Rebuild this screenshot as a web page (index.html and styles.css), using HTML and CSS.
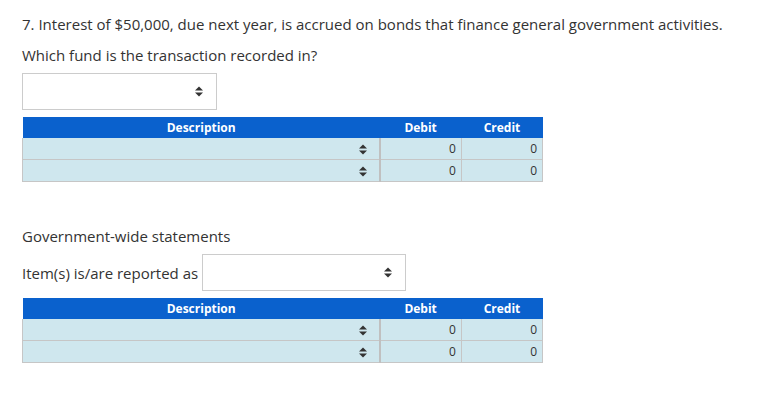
FILE: index.html
```html
<!DOCTYPE html>
<html>
<head>
<meta charset="utf-8">
<link rel="stylesheet" href="styles.css">
</head>
<body>
<div class="page">
  <p class="q">7. Interest of $50,000, due next year, is accrued on bonds that finance general government activities.</p>
  <p class="q q2">Which fund is the transaction recorded in?</p>
  <div class="select big"><span class="arr"><svg width="8" height="11" viewBox="0 0 8 11"><path d="M0 4.5 L4 0.5 L8 4.5 Z M0 6.5 L8 6.5 L4 10.5 Z" fill="#333"/></svg></span></div>

  <table class="je t1">
    <thead><tr><th class="desc">Description</th><th class="num">Debit</th><th class="num">Credit</th></tr></thead>
    <tbody>
      <tr><td class="desc"><span class="arr"><svg width="8" height="11" viewBox="0 0 8 11"><path d="M0 4.5 L4 0.5 L8 4.5 Z M0 6.5 L8 6.5 L4 10.5 Z" fill="#333"/></svg></span></td><td class="num">0</td><td class="num">0</td></tr>
      <tr><td class="desc"><span class="arr"><svg width="8" height="11" viewBox="0 0 8 11"><path d="M0 4.5 L4 0.5 L8 4.5 Z M0 6.5 L8 6.5 L4 10.5 Z" fill="#333"/></svg></span></td><td class="num">0</td><td class="num">0</td></tr>
    </tbody>
  </table>

  <p class="q q3">Government-wide statements</p>
  <div class="inline">
    <span class="lbl">Item(s) is/are reported as</span>
    <div class="select"><span class="arr"><svg width="8" height="11" viewBox="0 0 8 11"><path d="M0 4.5 L4 0.5 L8 4.5 Z M0 6.5 L8 6.5 L4 10.5 Z" fill="#333"/></svg></span></div>
  </div>

  <table class="je t2">
    <thead><tr><th class="desc">Description</th><th class="num">Debit</th><th class="num">Credit</th></tr></thead>
    <tbody>
      <tr><td class="desc"><span class="arr"><svg width="8" height="11" viewBox="0 0 8 11"><path d="M0 4.5 L4 0.5 L8 4.5 Z M0 6.5 L8 6.5 L4 10.5 Z" fill="#333"/></svg></span></td><td class="num">0</td><td class="num">0</td></tr>
      <tr><td class="desc"><span class="arr"><svg width="8" height="11" viewBox="0 0 8 11"><path d="M0 4.5 L4 0.5 L8 4.5 Z M0 6.5 L8 6.5 L4 10.5 Z" fill="#333"/></svg></span></td><td class="num">0</td><td class="num">0</td></tr>
    </tbody>
  </table>
</div>
</body>
</html>
```
FILE: styles.css
```css
html, body {
  margin: 0;
  padding: 0;
  background: #fff;
}
body {
  font-family: "Open Sans", "Liberation Sans", sans-serif;
  color: #333;
  font-size: 15px;
}
.page {
  padding: 14px 0 0 22px;
}
.q {
  margin: 0;
  line-height: 20px;
}
.q2 {
  margin-top: 11px;
}
.select {
  box-sizing: border-box;
  width: 204px;
  height: 37px;
  border: 1px solid #ccc;
  background: #fff;
  display: flex;
  align-items: center;
  justify-content: flex-end;
  padding-right: 13px;
}
.select.big {
  width: 195px;
  margin-top: 8px;
}
.arr {
  display: inline-flex;
}
.je {
  border-collapse: collapse;
  width: 521px;
  font-size: 12px;
}
.t1 {
  margin-top: 7px;
}
.je th {
  background: #0a61cd;
  color: #fff;
  font-weight: 700;
  height: 21px;
  padding: 0;
  text-align: center;
}
.je th.desc {
  width: 357px;
}
.je td {
  background: #cfe7ee;
  height: 21px;
  padding: 0;
  border: 1px solid #c6c6c6;
  border-top: 0;
}
.je td.desc {
  text-align: right;
  padding-right: 12px;
  border-right: 2px solid #c0c0c0;
}
.je td.desc .arr {
  vertical-align: middle;
}
.je td.num {
  text-align: right;
  padding-right: 5px;
  width: 75px;
}
.q3 {
  margin-top: 44px;
}
.inline {
  display: flex;
  align-items: center;
  margin-top: 8px;
}
.lbl {
  margin-right: 4px;
}
.t2 {
  margin-top: 7px;
}
```
